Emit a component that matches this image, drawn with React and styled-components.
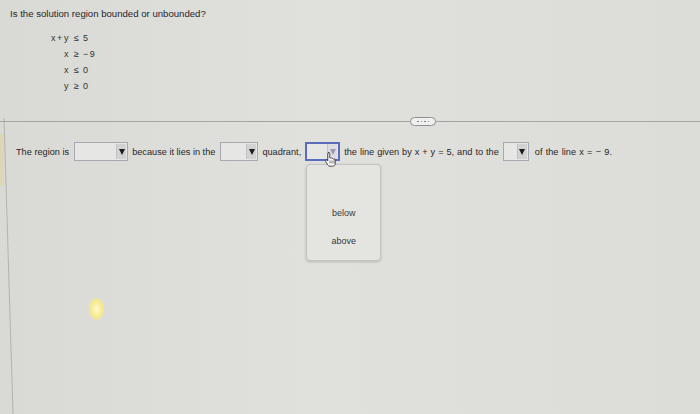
import React from 'react'
import styled, { createGlobalStyle } from 'styled-components'

const GlobalStyle = createGlobalStyle`
  html, body {
    margin: 0;
    padding: 0;
    background: #dcdcd8;
  }
  body {
    font-family: 'Liberation Sans', Arial, sans-serif;
    color: #27272a;
  }
`

const Page = styled.div`
  position: relative;
  width: 700px;
  height: 414px;
  overflow: hidden;
  background: linear-gradient(90deg, #d9d9d5 0%, #e0e0dc 45%, #dcdcd8 100%);
`

const Question = styled.div`
  padding: 8px 0 0 10px;
  font-size: 9.6px;
  line-height: 11px;
`

const Equations = styled.div`
  display: grid;
  grid-template-columns: 28px auto auto;
  column-gap: 4px;
  row-gap: 5px;
  margin: 14px 0 0 42px;
  width: max-content;
  font-size: 9px;
  line-height: 11px;
  color: #333;
`

const Lhs = styled.span`
  text-align: right;
  letter-spacing: 1.6px;
`

const Rel = styled.span`
  text-align: center;
`

const Rhs = styled.span`
  letter-spacing: 1.6px;
`

const Divider = styled.div`
  position: relative;
  margin-top: 29px;
  height: 1px;
  background: #a4a4a2;
`

const More = styled.div`
  position: absolute;
  left: 410px;
  top: -4px;
  width: 24px;
  height: 7px;
  border: 1px solid #8e8f98;
  border-radius: 5px;
  background: #f0f0ee;
  display: flex;
  align-items: center;
  justify-content: center;
  gap: 2px;
  span {
    width: 1.5px;
    height: 1.5px;
    background: #6a6b78;
    border-radius: 50%;
  }
`

const Row = styled.div`
  display: flex;
  align-items: center;
  gap: 4px;
  margin: 20px 0 0 16px;
  font-size: 9.2px;
  white-space: nowrap;
`

const Select = styled.div`
  position: relative;
  width: ${(p) => p.$w}px;
  height: 19px;
  box-sizing: border-box;
  border: ${(p) => (p.$focus ? '2px solid #5b6cbc' : '1px solid #a6a8b4')};
  background: #e6e6e4;
  display: flex;
  justify-content: flex-end;
  align-items: center;
  padding-right: 1px;
  margin: 0 0 0 ${(p) => p.$ml || 0}px;
`

const Arrow = styled.div`
  width: 9px;
  height: 15px;
  background: ${(p) => (p.$dim ? '#dedee2' : '#d2d2d2')};
  border-left: 1px solid #c2c2c6;
  display: flex;
  align-items: center;
  justify-content: center;
  &::after {
    content: '';
    border-left: 3.5px solid transparent;
    border-right: 3.5px solid transparent;
    border-top: 6px solid ${(p) => (p.$dim ? '#9a9cae' : '#1d1d1f')};
  }
`

const Menu = styled.div`
  position: absolute;
  left: -1px;
  top: 20px;
  width: 75px;
  height: 97px;
  box-sizing: border-box;
  background: #e4e4e1;
  border: 1px solid #c4c4c2;
  border-radius: 4px;
  box-shadow: 0 1px 3px rgba(0, 0, 0, 0.18);
  display: flex;
  flex-direction: column;
  align-items: center;
  padding-top: 43px;
  gap: 18px;
  font-size: 9px;
  color: #3a3a3c;
  z-index: 2;
`

const Hand = styled.svg`
  position: absolute;
  left: 17px;
  top: 7px;
  width: 14px;
  height: 16px;
  z-index: 3;
`

const Glare = styled.div`
  position: absolute;
  left: 89px;
  top: 298px;
  width: 15px;
  height: 22px;
  border-radius: 50%;
  background: radial-gradient(ellipse at center, #fffbd0 0%, #f6e98a 55%, rgba(240, 225, 140, 0) 100%);
`

const Edge = styled.svg`
  position: absolute;
  left: 0;
  top: 0;
  width: 700px;
  height: 414px;
  pointer-events: none;
`

const Spaced = styled.span`
  word-spacing: ${(p) => p.$ws || 0}px;
  margin-left: ${(p) => p.$ml || 0}px;
`

export default function App() {
  return (
    <Page>
      <GlobalStyle />
      <Edge viewBox="0 0 700 414">
        <line x1="4" y1="118" x2="13" y2="414" stroke="#a8a8a6" strokeWidth="0.8" />
        <rect x="0" y="134" width="4" height="52" fill="#e2d59a" opacity="0.5" />
      </Edge>
      <Question>Is the solution region bounded or unbounded?</Question>
      <Equations>
        <Lhs>x+y</Lhs>
        <Rel>≤</Rel>
        <Rhs>5</Rhs>
        <Lhs>x</Lhs>
        <Rel>≥</Rel>
        <Rhs>−9</Rhs>
        <Lhs>x</Lhs>
        <Rel>≤</Rel>
        <Rhs>0</Rhs>
        <Lhs>y</Lhs>
        <Rel>≥</Rel>
        <Rhs>0</Rhs>
      </Equations>
      <Divider>
        <More>
          <span />
          <span />
          <span />
          <span />
        </More>
      </Divider>
      <Row>
        <span>The region is</span>
        <Select $w={54} $ml={1}>
          <Arrow />
        </Select>
        <span>because it lies in the</span>
        <Select $w={38} $ml={1}>
          <Arrow />
        </Select>
        <span>quadrant,</span>
        <Select $w={35} $focus>
          <Arrow $dim />
          <Hand viewBox="0 0 14 16">
            <path
              d="M4.5 1.5c0.8 0 1.3 0.5 1.3 1.3v4.2l0.6-0.1c0.7-0.2 1.3 0.1 1.5 0.6c0.6-0.3 1.4-0.1 1.6 0.5c0.7-0.2 1.5 0.2 1.6 0.9l0.2 3.2c0.1 1.6-1 3.1-2.7 3.1h-2.6c-1 0-1.8-0.5-2.3-1.3l-2-3.4c-0.4-0.6-0.1-1.3 0.5-1.5c0.5-0.2 1 0 1.3 0.4l0.3 0.5v-7.1c0-0.8 0.4-1.3 1.3-1.3z"
              fill="#fafafa"
              stroke="#222"
              strokeWidth="0.8"
              strokeLinejoin="round"
            />
            <path d="M6 9.5v3M8 9.5v3M10 9.5v3" stroke="#222" strokeWidth="0.6" />
          </Hand>
          <Menu>
            <span>below</span>
            <span>above</span>
          </Menu>
        </Select>
        <Spaced $ws={0.4}>the line given by x + y = 5, and to the</Spaced>
        <Select $w={26}>
          <Arrow />
        </Select>
        <Spaced $ws={0.7} $ml={2}>of the line x = − 9.</Spaced>
      </Row>
      <Glare />
    </Page>
  )
}
